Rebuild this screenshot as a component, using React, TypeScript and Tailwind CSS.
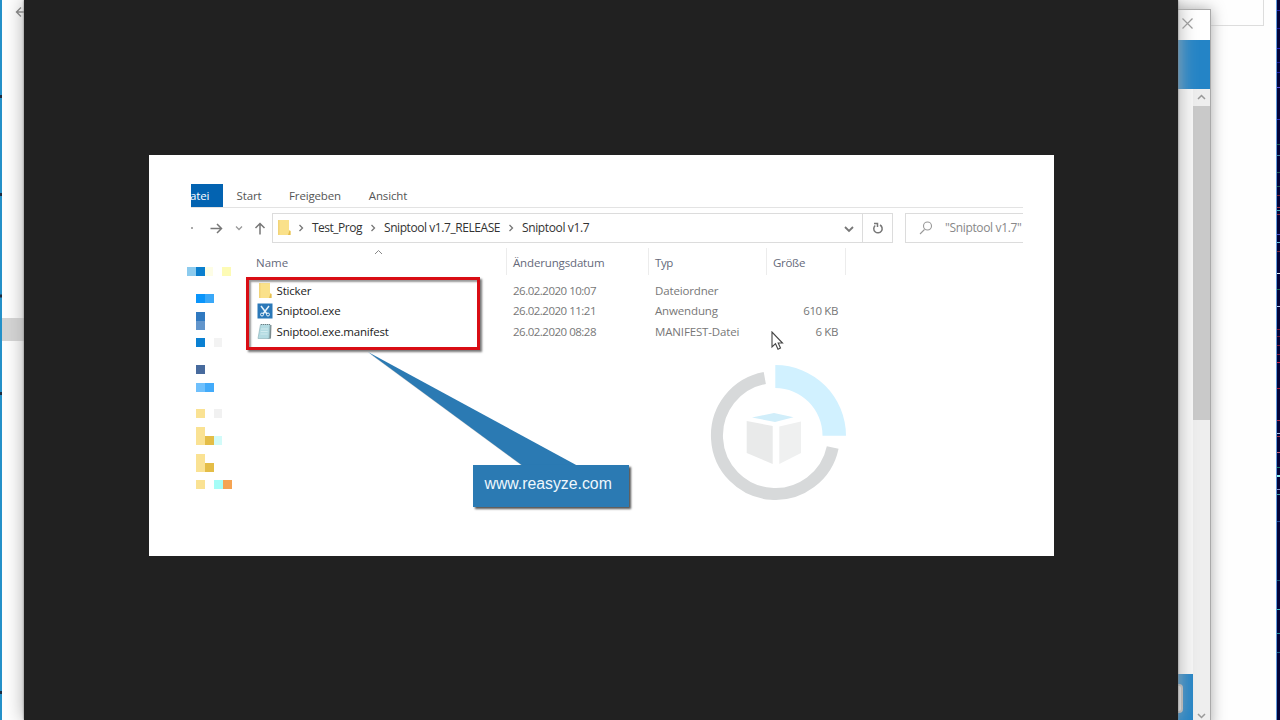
import type { ReactNode } from "react";

type Entry = {
  name: string;
  date: string;
  type: string;
  size: string;
  icon: ReactNode;
};

const FolderIcon = () => (
  <svg width="14" height="17" viewBox="0 0 14 17">
    <path d="M1 1h11v10l1.500 1v4H1z" fill="#fae18a" />
    <path d="M1 1h1.500v15H1z" fill="#f2d478" />
    <path d="M12.500 11.500l1 .5v4H11z" fill="#e5bd4e" />
  </svg>
);

const SnipIcon = () => (
  <svg width="16" height="16" viewBox="0 0 16 16">
    <rect x="0.500" y="0.500" width="15" height="15" fill="#2b78b8" />
    <path d="M4 3l6 8M12 3l-6 8" stroke="#e8f3fb" strokeWidth="1.500" fill="none" />
    <circle cx="5" cy="11.500" r="1.500" stroke="#e8f3fb" fill="none" />
    <circle cx="11" cy="11.500" r="1.500" stroke="#e8f3fb" fill="none" />
  </svg>
);

const ManifestIcon = () => (
  <svg width="16" height="17" viewBox="0 0 16 17">
    <path d="M4 2h10.500l-.5 13.500-3 .5z" fill="#7d8c8f" />
    <path d="M3.500 1.500h9.500l-1 14H1z" fill="#b4dbe2" stroke="#8fb4bc" strokeWidth="0.700" />
    <path d="M4 1.500h9" stroke="#6f7f84" strokeDasharray="1 1" />
    <path d="M4 6h7M3.700 8.500h7M3.500 11h7" stroke="#d8eff3" strokeWidth="0.800" />
  </svg>
);

const ENTRIES: Entry[] = [
  { name: "Sticker", date: "26.02.2020 10:07", type: "Dateiordner", size: "", icon: <FolderIcon /> },
  { name: "Sniptool.exe", date: "26.02.2020 11:21", type: "Anwendung", size: "610 KB", icon: <SnipIcon /> },
  {
    name: "Sniptool.exe.manifest",
    date: "26.02.2020 08:28",
    type: "MANIFEST-Datei",
    size: "6 KB",
    icon: <ManifestIcon />,
  },
];

// x, y, width, height, colour
const MOSAIC: [number, number, number, number, string][] = [
  [0, 0, 9, 9, "#8ccbee"],
  [9, 0, 9, 9, "#0a7fce"],
  [18, 0, 8, 9, "#fdfde6"],
  [35, 0, 9, 9, "#fdfbb5"],
  [9, 27, 9, 9, "#0a95fb"],
  [18, 27, 9, 9, "#3aa8f8"],
  [9, 45, 9, 9, "#3079c0"],
  [9, 54, 9, 9, "#6295cb"],
  [9, 71, 9, 9, "#0a80d2"],
  [27, 71, 8, 9, "#f3f3f3"],
  [9, 98, 9, 9, "#476a9d"],
  [9, 116, 9, 9, "#6fc0fc"],
  [18, 116, 9, 9, "#43abfa"],
  [9, 142, 9, 9, "#fae293"],
  [27, 142, 8, 9, "#f1f1f1"],
  [9, 160, 9, 18, "#fae293"],
  [18, 169, 9, 9, "#e4bd47"],
  [27, 169, 8, 9, "#d2fbf9"],
  [9, 187, 9, 18, "#fae293"],
  [18, 196, 9, 9, "#e4bd47"],
  [9, 213, 9, 9, "#fae293"],
  [27, 213, 9, 9, "#a5fdf7"],
  [36, 213, 9, 9, "#f5a453"],
];

// y and colour of the wallpaper lines that show past the right window edge
const WALLPAPER_LINES: [number, string][] = [
  [10, "#2020b0"],
  [28, "#1c1c98"],
  [48, "#2424c0"],
  [62, "#1a1a90"],
  [72, "#2020a8"],
  [87, "#5a50d8"],
  [119, "#2a30c0"],
  [144, "#1c5a50"],
  [155, "#3f7f9c"],
  [172, "#1f5c50"],
  [186, "#245a58"],
  [195, "#7c2030"],
  [207, "#a03040"],
  [210, "#45b0b8"],
  [214, "#8a2838"],
  [234, "#4a50c8"],
  [242, "#64c0d8"],
  [251, "#802838"],
  [273, "#e0f0f8"],
  [289, "#1c6850"],
  [306, "#b8c8f0"],
  [329, "#7c1838"],
  [336, "#6c1838"],
  [345, "#7c1838"],
  [354, "#841838"],
  [362, "#d02040"],
  [388, "#a81c38"],
  [420, "#b02848"],
  [433, "#a8c0e8"],
  [436, "#a03048"],
  [452, "#c86070"],
  [467, "#1c7868"],
  [475, "#90f0f0"],
  [476, "#90f0f0"],
  [489, "#8890c8"],
  [494, "#40a0a0"],
  [521, "#204890"],
  [580, "#185870"],
  [609, "#40c0c0"],
  [633, "#209098"],
  [652, "#186080"],
];

function Chevron({ className }: { className: string }) {
  return (
    <svg width="8" height="8" viewBox="0 0 8 8" className={className}>
      <path d="M1 2.500l3 3 3-3" fill="none" stroke="currentColor" strokeWidth="1.300" />
    </svg>
  );
}

function AddressBar() {
  return (
    <div className="mt-[5px] flex h-[30px] items-stretch">
      <div className="flex w-[81px] shrink-0 items-center text-[#777]">
        <span className="h-[2px] w-[2px] bg-[#aaa]" />
        <svg width="13" height="13" viewBox="0 0 13 13" className="ml-[17px]">
          <path d="M0.500 6.500h11M7 2l4.500 4.500L7 11" fill="none" stroke="currentColor" strokeWidth="1.500" />
        </svg>
        <Chevron className="ml-[12px] text-[#999]" />
        <svg width="12" height="13" viewBox="0 0 12 13" className="ml-[11px]">
          <path d="M6 12.500V1.500M1.500 6L6 1.500 10.500 6" fill="none" stroke="currentColor" strokeWidth="1.500" />
        </svg>
      </div>
      <div className="flex w-[621px] shrink-0 items-center border border-[#dcdcdc] text-[#333]">
        <span className="mt-[-2px] ml-[4px]">
          <FolderIcon />
        </span>
        <Chevron className="ml-[6px] -rotate-90 text-[#777]" />
        <span className="ml-[7px] w-[50px] whitespace-nowrap text-[12px] tracking-[-0.500px]">Test_Prog</span>
        <Chevron className="ml-[7px] -rotate-90 text-[#777]" />
        <span className="ml-[7px] w-[117px] whitespace-nowrap text-[12px] tracking-[-0.430px]">
          Sniptool v1.7_RELEASE
        </span>
        <Chevron className="ml-[6px] -rotate-90 text-[#777]" />
        <span className="ml-[7px] whitespace-nowrap text-[12px] tracking-[-0.370px]">Sniptool v1.7</span>
        <svg width="10" height="8" viewBox="0 0 10 8" className="mt-[2px] ml-auto mr-[8px]">
          <path d="M1 2l4 4 4-4" fill="none" stroke="#777" strokeWidth="1.800" />
        </svg>
        <div className="flex h-full w-[30px] items-center justify-center border-l border-[#dcdcdc]">
          <svg width="12" height="13" viewBox="0 0 12 13">
            <path d="M3.200 3.500A4.200 4.200 0 1 0 8 3M2 1.500h3.500V5" fill="none" stroke="#777" strokeWidth="1.500" />
          </svg>
        </div>
      </div>
      <div className="ml-[12px] flex flex-1 items-center border border-r-0 border-[#dcdcdc]">
        <svg width="14" height="14" viewBox="0 0 14 14" className="ml-[13px]">
          <path d="M5.500 8.500L1 13" stroke="#999" strokeWidth="1.100" />
          <circle cx="8.500" cy="5" r="4" fill="none" stroke="#999" strokeWidth="1.100" />
        </svg>
        <span className="ml-[12px] whitespace-nowrap text-[12px] tracking-[-0.340px] text-[#888]">
          "Sniptool v1.7"
        </span>
      </div>
    </div>
  );
}

function FileList() {
  return (
    <div className="w-[600px] text-[11.500px]">
      <div className="mt-[5px] flex h-[27px] items-center text-[11.500px] text-[#65697a]">
        <div className="relative flex h-full w-[260px] items-center border-r border-[#ececec] pt-[2px] pl-[9px]">
          Name
          <svg width="9" height="6" viewBox="0 0 9 6" className="absolute top-[1px] left-[127px]">
            <path d="M1 5l3.500-3.500L8 5" fill="none" stroke="#888" />
          </svg>
        </div>
        <div className="flex h-full w-[142px] items-center border-r border-[#ececec] pt-[2px] pl-[6px] tracking-[-0.150px]">
          Änderungsdatum
        </div>
        <div className="flex h-full w-[118px] items-center border-r border-[#ececec] pt-[2px] pl-[6px] tracking-[-0.400px]">
          Typ
        </div>
        <div className="flex h-full w-[79px] items-center border-r border-[#ececec] pt-[2px] pl-[6px] tracking-[-0.300px]">
          Größe
        </div>
      </div>
      <div className="mt-[5px]">
        {ENTRIES.map((entry) => (
          <div key={entry.name} className="flex h-[20.700px] items-center whitespace-nowrap text-[#777]">
            <span className="flex w-[26px] justify-center pl-[9px]">{entry.icon}</span>
            <span className="w-[230px] pl-[3.500px] tracking-[-0.180px] text-[#222]">{entry.name}</span>
            <span className="w-[142px] pl-[10px] tracking-[-0.500px]">{entry.date}</span>
            <span className="w-[118px] pl-[10px] tracking-[-0.150px]">{entry.type}</span>
            <span className="w-[75px] text-right tracking-[-0.400px]">{entry.size}</span>
          </div>
        ))}
      </div>
    </div>
  );
}

function Watermark() {
  return (
    <svg width="140" height="140" viewBox="706 362 140 140" className="absolute top-[207px] left-[557px] overflow-visible">
      <path d="M764.800 378A58.500 58.500 0 1 0 832.700 447.500" fill="none" stroke="#d7d9da" strokeWidth="12" />
      <path d="M775.300 365A70.700 70.700 0 0 1 846 435.700H822.500A47.500 47.500 0 0 0 775.300 388z" fill="#d1f1ff" />
      <path d="M752 417.500L774 413l19.500 4.300L775 422z" fill="#d1eefa" />
      <path d="M746.700 421l26 5v38l-26-11z" fill="#e9eaea" />
      <path d="M779.300 426.500L801 421.500V453l-21.700 11z" fill="#eff0f0" />
    </svg>
  );
}

function Annotations() {
  return (
    <>
      <div className="absolute top-[122px] left-[97px] h-[73px] w-[234px] border-[3px] border-[#d90d14] shadow-[2px_2px_2px_#777,inset_2px_2px_2px_#999]" />
      <svg width="220" height="120" viewBox="365 350 220 120" className="absolute top-[195px] left-[216px]">
        <path d="M370 354L525 468H578z" fill="#999" opacity="0.500" />
        <path d="M368 352L523 466H578z" fill="#2b7ab3" />
      </svg>
      <div className="absolute top-[310px] left-[324px] flex h-[42px] w-[156px] items-center bg-[#2b7ab3] pb-[4px] pl-[11.500px] font-['Liberation_Sans',sans-serif] text-[15.800px] text-[#eef7fd] shadow-[2px_2px_2px_#555]">
        www.reasyze.com
      </div>
      <svg width="13" height="20" viewBox="0 0 13 20" className="absolute top-[176px] left-[622px]">
        <path
          d="M1 1v15l3.500-3.300L7 18.200l2.500-1.200L7.200 12H11.500z"
          fill="#fff"
          stroke="#444"
          strokeWidth="1.100"
        />
      </svg>
    </>
  );
}

function Explorer() {
  return (
    <div className="relative mt-[155px] ml-[125px] h-[401px] w-[905px] bg-white pt-[29px] pr-[31px] pl-[42px]">
      <Watermark />
      <div className="flex h-[24px] border-b border-[#e3e3e3] text-[11.500px] tracking-[-0.150px] text-[#555]">
        <div className="flex w-[32px] items-center bg-[#0363b1] text-white">
          <span className="ml-[-1px]">atei</span>
        </div>
        <div className="flex w-[52px] items-center justify-center">Start</div>
        <div className="flex w-[80px] items-center justify-center">Freigeben</div>
        <div className="flex w-[66px] items-center justify-center">Ansicht</div>
      </div>
      <AddressBar />
      <div className="flex">
        <svg width="48" height="224" viewBox="0 0 48 224" className="mt-[24px] mr-[12px] ml-[-4px] shrink-0">
          {MOSAIC.map(([x, y, w, h, color]) => (
            <rect key={`${x}-${y}`} x={x} y={y} width={w} height={h} fill={color} />
          ))}
        </svg>
        <FileList />
      </div>
      <Annotations />
    </div>
  );
}

function SideWindow() {
  return (
    <div className="absolute top-[9px] left-[1100px] flex h-[720px] w-[111px] flex-col border border-[#aaa] bg-white shadow-[0_0_14px_#aaa]">
      <div className="flex h-[30px] items-center justify-end pr-[17px] pb-[3px]">
        <svg width="11" height="11" viewBox="0 0 11 11">
          <path d="M0.500 0.500l10 10M10.500 0.500l-10 10" stroke="#999" strokeWidth="1.200" />
        </svg>
      </div>
      <div className="h-[49px] bg-[#2484c6]" />
      <div className="flex flex-1">
        <div className="flex flex-1 flex-col justify-end bg-[#f8f8f8]">
          <div className="flex h-[54px] justify-end bg-[#2484c6] pt-[10px] pr-[10px]">
            <div className="h-[29px] w-[30px] rounded-[4px] border-2 border-[#bbb] bg-[#e4e4e4]" />
          </div>
        </div>
        <div className="flex w-[17px] flex-col items-center bg-[#eee]">
          <svg width="9" height="17" viewBox="0 0 9 17">
            <path d="M1 10l3.500-3.500L8 10" fill="none" stroke="#999" strokeWidth="1.500" />
          </svg>
          <div className="h-[314px] w-full bg-[#c9c9c9]" />
          <svg width="9" height="8" viewBox="0 0 9 8" className="mt-[293px]">
            <path d="M1 1l3.500 3.500L8 1" fill="none" stroke="#999" strokeWidth="1.500" />
          </svg>
        </div>
      </div>
    </div>
  );
}

export default function App() {
  return (
    <div className="relative flex h-[720px] w-[1280px] overflow-hidden bg-white font-['Open_Sans','Noto_Sans',sans-serif]">
      <svg width="2" height="720" viewBox="0 0 2 720" className="shrink-0 bg-[#2490c8]">
        <path d="M0 96.500h2M0 194.500h2M0 296h2M0 393.500h2M0 692.500h2" stroke="#1c2c40" strokeWidth="3" />
      </svg>
      <div className="flex flex-1 flex-col bg-[#fefefe]">
        <svg width="14" height="12" viewBox="0 0 14 12" className="mt-[6px] ml-[12px]">
          <path d="M13 6H2.500M7 1.500L2.500 6 7 10.500" fill="none" stroke="#777" strokeWidth="1.400" />
        </svg>
        <div className="mt-[300px] h-[23px] w-[22px] bg-[#d4d4d4]" />
      </div>
      <svg width="4" height="720" viewBox="0 0 4 720" className="shrink-0 bg-[#04043a]">
        {WALLPAPER_LINES.map(([y, color]) => (
          <rect key={y} x="1" y={y} width="3" height="1" fill={color} />
        ))}
        <rect width="1" height="720" fill="#5f98dc" />
      </svg>
      <div className="absolute top-[-2px] left-[1100px] h-[28px] w-[164px] border border-[#ddd]" />
      <SideWindow />
      <div className="absolute top-0 left-[24px] flow-root h-[720px] w-[1154px] bg-[#212121] shadow-[0_0_2px_#777,0_0_18px_#aaa]">
        <Explorer />
      </div>
    </div>
  );
}
